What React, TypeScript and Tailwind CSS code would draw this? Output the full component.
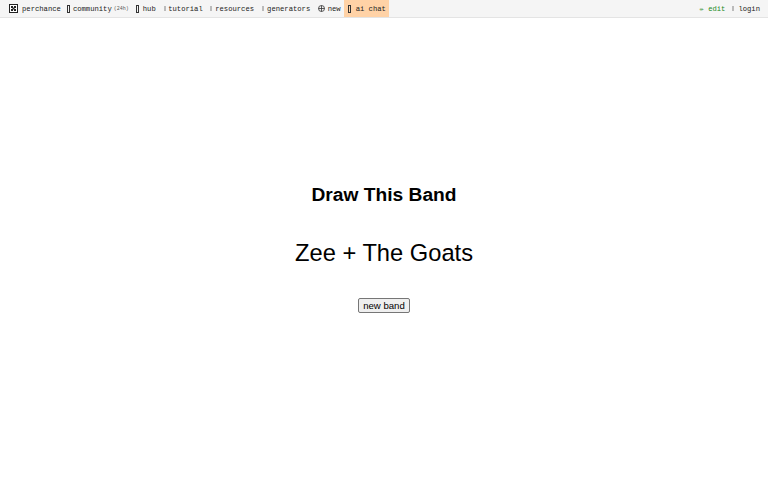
const links = [
  { label: "community", small: "(24h)", item: "ml-[6.6px]", tofu: "mr-[2.5px] h-[8px] w-[3px] border border-[#333]" },
  { label: "hub", item: "ml-[7.5px]", tofu: "mr-[3.5px] h-[8px] w-[3px] border border-[#333]" },
  { label: "tutorial", item: "ml-[8px]", tofu: "mr-[2.5px] h-[5px] w-[2px] border border-[#bbb]" },
  { label: "resources", item: "ml-[7.5px]", tofu: "mr-[3px] h-[5px] w-[2px] border border-[#bbb]" },
  { label: "generators", item: "ml-[8px]", tofu: "mr-[3px] h-[5px] w-[2px] border border-[#bbb]" },
];

function Dice() {
  return (
    <svg width="9" height="9" viewBox="0 0 9 9" className="mr-[4px] shrink-0" aria-hidden>
      <rect x="0.5" y="0.5" width="8" height="8" fill="#fff" stroke="#222" />
      <rect x="2" y="2" width="2" height="2" fill="#222" />
      <rect x="5" y="2" width="2" height="2" fill="#222" />
      <rect x="3.5" y="3.5" width="2" height="2" fill="#222" />
      <rect x="2" y="5" width="2" height="2" fill="#222" />
      <rect x="5" y="5" width="2" height="2" fill="#222" />
    </svg>
  );
}

function Globe() {
  return (
    <svg width="7" height="7" viewBox="0 0 7 7" className="mr-[3px] shrink-0" fill="none" stroke="#333" strokeWidth="0.8" aria-hidden>
      <circle cx="3.5" cy="3.5" r="3" />
      <path d="M0.5 3.5H6.5M3.5 0.5V6.5" />
    </svg>
  );
}

export default function App() {
  return (
    <div className="h-[480px] overflow-hidden bg-white font-['Liberation_Sans',sans-serif] text-black">
      <nav className="flex h-[18px] items-center justify-between border-b border-[#e4e4e4] bg-[#f5f5f5] pl-[9px] font-['Liberation_Mono',monospace] text-[7.2px] text-[#222]">
        <div className="flex h-full items-center">
          <Dice />
          <span className="pt-[1px]">perchance</span>
          {links.map((link) => (
            <span key={link.label} className={`flex items-center pt-[1px] ${link.item}`}>
              <span className={`inline-block ${link.tofu}`} aria-hidden />
              <span>{link.label}</span>
              {link.small && <span className="ml-[2px] mt-[2px] text-[5px] leading-none text-[#555]">{link.small}</span>}
            </span>
          ))}
          <span className="ml-[7.5px] flex items-center pt-[1px]">
            <Globe />
            new
          </span>
          <span className="ml-[3px] flex h-full items-center bg-[#ffd2a6] pl-[4px] pr-[3px] pt-[1px]">
            <span className="mr-[5px] inline-block h-[8px] w-[3px] border border-[#333]" aria-hidden />
            <span>ai chat</span>
          </span>
        </div>
        <div className="flex items-center pr-[8px] pt-[1px]">
          <span className="text-[#1a8a1a]">✏ edit</span>
          <span className="ml-[7px] flex items-center">
            <span className="mr-[4px] inline-block h-[5px] w-[2px] border border-[#bbb]" aria-hidden />
            login
          </span>
        </div>
      </nav>
      <main className="flex flex-col items-center">
        <h1 className="mt-[166px] text-[19.2px] font-bold leading-[22px]">Draw This Band</h1>
        <p className="mt-[33px] text-[23.7px] leading-[28px]">Zee + The Goats</p>
        <button className="mt-[31px] h-[15px] w-[52px] rounded-[2px] border border-[#767676] bg-[#efefef] text-[9.6px] leading-none">
          new band
        </button>
      </main>
    </div>
  );
}
